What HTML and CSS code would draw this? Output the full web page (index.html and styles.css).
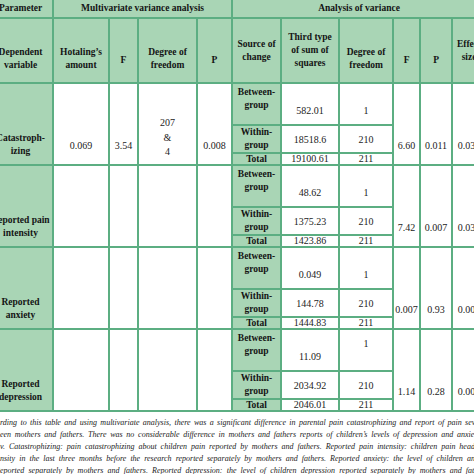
FILE: index.html
```html
<!DOCTYPE html>
<html>
<head>
<meta charset="utf-8">
<link rel="stylesheet" href="styles.css">
</head>
<body>
<div class="page">
<table class="stats">
<colgroup>
<col class="c1"><col class="c2"><col class="c3"><col class="c4"><col class="c5"><col class="c6"><col class="c7"><col class="c8"><col class="c9"><col class="c10"><col class="c11">
</colgroup>
<tr class="h1">
<th class="param">Parameter</th>
<th colspan="4">Multivariate variance analysis</th>
<th colspan="6">Analysis of variance</th>
</tr>
<tr class="h2">
<th class="low2">Dependent<br>variable</th>
<th class="low2">Hotaling’s<br>amount</th>
<th class="low1">F</th>
<th class="low2">Degree of<br>freedom</th>
<th class="low1">P</th>
<th>Source of<br>change</th>
<th>Third type<br>of sum of<br>squares</th>
<th class="low2">Degree of<br>freedom</th>
<th class="low1">F</th>
<th class="low1">P</th>
<th>Effect<br>size</th>
</tr>

<tr class="between">
<th class="label span" rowspan="3">Catastroph-<br>izing</th>
<td class="span" rowspan="3">0.069</td>
<td class="span" rowspan="3">3.54</td>
<td class="span df" rowspan="3">207<br>&amp;<br>4</td>
<td class="span" rowspan="3">0.008</td>
<th class="src top">Between-<br>group</th>
<td class="low">582.01</td>
<td class="low">1</td>
<td class="span" rowspan="3">6.60</td>
<td class="span" rowspan="3">0.011</td>
<td class="span" rowspan="3">0.031</td>
</tr>
<tr class="within"><th class="src">Within-<br>group</th><td>18518.6</td><td>210</td></tr>
<tr class="total"><th class="src">Total</th><td>19100.61</td><td>211</td></tr>

<tr class="between">
<th class="label span" rowspan="3">Reported pain<br>intensity</th>
<td class="span" rowspan="3"></td>
<td class="span" rowspan="3"></td>
<td class="span" rowspan="3"></td>
<td class="span" rowspan="3"></td>
<th class="src top">Between-<br>group</th>
<td class="low">48.62</td>
<td class="low">1</td>
<td class="span" rowspan="3">7.42</td>
<td class="span" rowspan="3">0.007</td>
<td class="span" rowspan="3">0.034</td>
</tr>
<tr class="within"><th class="src">Within-<br>group</th><td>1375.23</td><td>210</td></tr>
<tr class="total"><th class="src">Total</th><td>1423.86</td><td>211</td></tr>

<tr class="between">
<th class="label span" rowspan="3">Reported<br>anxiety</th>
<td class="span" rowspan="3"></td>
<td class="span" rowspan="3"></td>
<td class="span" rowspan="3"></td>
<td class="span" rowspan="3"></td>
<th class="src top">Between-<br>group</th>
<td class="low">0.049</td>
<td class="low">1</td>
<td class="span" rowspan="3">0.007</td>
<td class="span" rowspan="3">0.93</td>
<td class="span" rowspan="3">0.000</td>
</tr>
<tr class="within"><th class="src">Within-<br>group</th><td>144.78</td><td>210</td></tr>
<tr class="total"><th class="src">Total</th><td>1444.83</td><td>211</td></tr>

<tr class="between">
<th class="label span" rowspan="3">Reported<br>depression</th>
<td class="span" rowspan="3"></td>
<td class="span" rowspan="3"></td>
<td class="span" rowspan="3"></td>
<td class="span" rowspan="3"></td>
<th class="src top">Between-<br>group</th>
<td class="low">11.09</td>
<td class="high">1</td>
<td class="span" rowspan="3">1.14</td>
<td class="span" rowspan="3">0.28</td>
<td class="span" rowspan="3">0.005</td>
</tr>
<tr class="within"><th class="src">Within-<br>group</th><td>2034.92</td><td>210</td></tr>
<tr class="total"><th class="src">Total</th><td>2046.01</td><td>211</td></tr>
</table>

<div class="note">
<div class="line">rding to this table and using multivariate analysis, there was a significant difference in parental pain catastrophizing and report of pain severity</div>
<div class="line">een mothers and fathers. There was no considerable difference in mothers and fathers reports of children’s levels of depression and anxiety in</div>
<div class="line">v. Catastrophizing: pain catastrophizing about children pain reported by mothers and fathers. Reported pain intensity: children pain headache</div>
<div class="line">nsity in the last three months before the research reported separately by mothers and fathers. Reported anxiety: the level of children anxiety</div>
<div class="line last">Reported separately by mothers and fathers. Reported depression: the level of children depression reported separately by mothers and fathers.</div>
</div>
</div>
</body>
</html>
```
FILE: styles.css
```css
html, body {
  margin: 0;
  padding: 0;
  background: #ffffff;
}

body {
  width: 474px;
  height: 474px;
  overflow: hidden;
  font-family: "Liberation Serif", "Times New Roman", serif;
  color: #1c1c1c;
}

.page {
  margin: -2px 0 0 -13px;
}

.stats {
  border-collapse: collapse;
  table-layout: fixed;
  width: 498px;
}

.c1 { width: 65px; }
.c2 { width: 56px; }
.c3 { width: 29px; }
.c4 { width: 59px; }
.c5 { width: 35px; }
.c6 { width: 49px; }
.c7 { width: 58px; }
.c8 { width: 54px; }
.c9 { width: 27px; }
.c10 { width: 32px; }
.c11 { width: 34px; }

.stats th,
.stats td {
  border: 2px solid #5cae82;
  padding: 0;
  text-align: center;
  vertical-align: middle;
  line-height: 13px;
  font-size: 10px;
  font-weight: normal;
  background: #ffffff;
}

.stats th {
  background: #a9d5b5;
  font-weight: bold;
  font-size: 9.5px;
  color: #141414;
}

.h1 { height: 19px; }
.h2 { height: 65px; }
.between { height: 42px; }
.within { height: 28px; }
.total { height: 12px; }

.total th,
.total td {
  line-height: 10px;
}

.stats th.param {
  text-align: left;
  padding-left: 10px;
}

.stats th.low2 {
  vertical-align: bottom;
  padding-bottom: 10px;
}

.stats th.low1 {
  vertical-align: bottom;
  padding-bottom: 15px;
}

.stats .span {
  padding-top: 42px;
}

.stats .df {
  padding-top: 28px;
  line-height: 14.5px;
}

.stats th.top {
  vertical-align: top;
  padding-top: 2px;
}

.stats td.low {
  vertical-align: bottom;
  padding-bottom: 7px;
}

.stats td.high {
  vertical-align: top;
  padding-top: 7px;
}

.note {
  margin-top: 5px;
  margin-left: 13px;
  font-style: italic;
  font-size: 8px;
  line-height: 12px;
  color: #222222;
}

.line {
  width: 490px;
  height: 12px;
  overflow: hidden;
  text-align: justify;
  text-align-last: justify;
}

.line.last {
  text-indent: -5px;
}
```
